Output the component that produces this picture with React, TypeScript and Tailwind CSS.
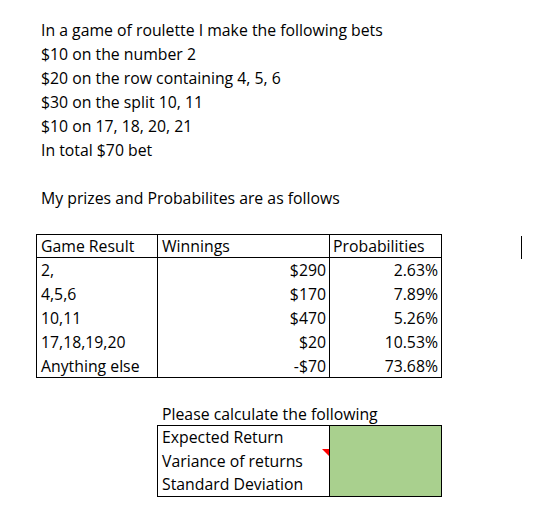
import React from "react";

const lines = [
  "In a game of roulette I make the following bets",
  "$10 on the number 2",
  "$20 on the row containing 4, 5, 6",
  "$30 on the split 10, 11",
  "$10 on 17, 18, 20, 21",
  "In total $70 bet",
];

const rows = [
  ["2,", "$290", "2.63%"],
  ["4,5,6", "$170", "7.89%"],
  ["10,11", "$470", "5.26%"],
  ["17,18,19,20", "$20", "10.53%"],
  ["Anything else", "-$70", "73.68%"],
];

export default function App() {
  return (
    <div className="relative w-[553px] h-[524px] bg-white text-black [font-family:'Open_Sans',Lato,sans-serif] text-[15.8px] leading-[24px]">
      <div className="pt-[17px] pl-[36px]">
        {lines.map((l) => (
          <div key={l} className="h-[24px] pl-[5px] pt-[1px] whitespace-nowrap">
            {l}
          </div>
        ))}
        <div className="h-[24px]" />
        <div className="h-[24px] pl-[5px] pt-[1px] whitespace-nowrap">My prizes and Probabilites are as follows</div>
        <div className="h-[25px]" />

        <div className="w-[406px] border border-black">
          <div className="flex h-[23px] border-b border-black">
            <div className="w-[120px] pl-[4px] leading-[23px] whitespace-nowrap">Game Result</div>
            <div className="w-[172px] border-l border-black pl-[4px] leading-[23px]">Winnings</div>
            <div className="flex-1 border-l border-black pl-[3px] leading-[23px]">Probabilities</div>
          </div>
          {rows.map((r, i) => (
            <div key={r[0]} className={`flex ${i === 4 ? "h-[23px]" : "h-[24px]"}`}>
              <div className="w-[120px] pl-[4px] whitespace-nowrap leading-[24px]">{r[0]}</div>
              <div className="w-[172px] border-l border-black pr-[3px] text-right leading-[24px]">{r[1]}</div>
              <div className="flex-1 border-l border-black pr-[3px] text-right leading-[24px]">{r[2]}</div>
            </div>
          ))}
        </div>

        <div className="h-[23px]" />
        <div className="h-[24px] pl-[126px] pt-[1px] whitespace-nowrap">Please calculate the following</div>
        <div className="ml-[121px] w-[285px] flex border border-black">
          <div className="w-[171px]">
            <div className="h-[23px] pl-[4px] leading-[23px] whitespace-nowrap">Expected Return</div>
            <div className="relative h-[24px] pl-[4px] leading-[24px] whitespace-nowrap">
              Variance of returns
              <svg className="absolute right-0 top-0" width="7" height="7" viewBox="0 0 7 7">
                <polygon points="0,0 7,0 7,7" fill="#ff0000" />
              </svg>
            </div>
            <div className="h-[23px] pl-[4px] leading-[23px] whitespace-nowrap">Standard Deviation</div>
          </div>
          <div className="flex-1 border-l border-black bg-[#a9d08e]" />
        </div>
      </div>

      <div className="absolute left-[521px] top-[236px] w-[1px] h-[23px] bg-black" />
    </div>
  );
}
